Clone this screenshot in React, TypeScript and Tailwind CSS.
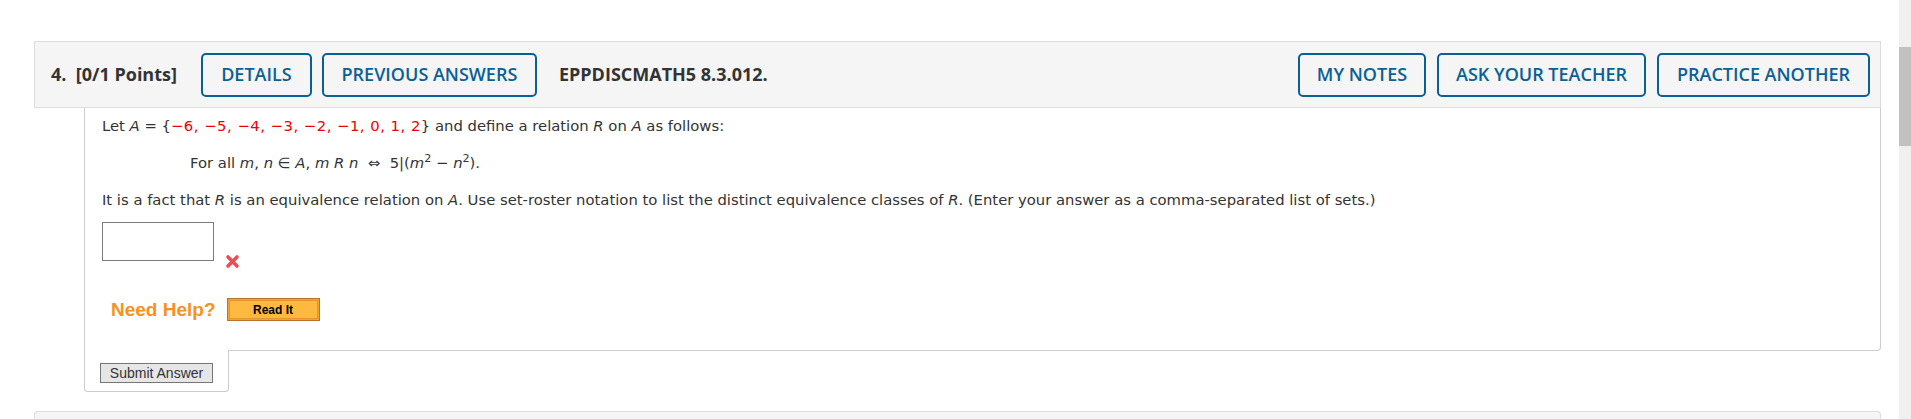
import React from "react";

function HeaderButton({ label, w }: { label: string; w: string }) {
  return (
    <div
      className={`flex h-[44px] ${w} shrink-0 items-center justify-center rounded-[5px] border-2 border-[#0b5f97] text-[#0b5f97]`}
    >
      {label}
    </div>
  );
}

export default function App() {
  return (
    <div className="flex h-[419px] w-full overflow-hidden bg-white">
      <div className="w-[1899px] shrink-0 pl-[34px] pr-[18px] pt-[41px]">
        {/* Header */}
        <div className="flex h-[67px] items-center border border-[#dcdcdc] bg-[#f5f5f5] pl-[16px] pr-[10px] font-['Open_Sans',sans-serif] text-[18px] font-semibold">
          <span className="font-bold text-[#333]">4.&nbsp; [0/1 Points]</span>
          <div className="ml-[24px] flex">
            <HeaderButton label="DETAILS" w="w-[111px]" />
          </div>
          <div className="ml-[10px] flex">
            <HeaderButton label="PREVIOUS ANSWERS" w="w-[215px]" />
          </div>
          <span className="ml-[22px] font-bold text-[#333]">EPPDISCMATH5 8.3.012.</span>
          <div className="flex-1" />
          <div className="flex gap-[11px]">
            <HeaderButton label="MY NOTES" w="w-[128px]" />
            <HeaderButton label="ASK YOUR TEACHER" w="w-[209px]" />
            <HeaderButton label="PRACTICE ANOTHER" w="w-[213px]" />
          </div>
        </div>

        {/* Question panel */}
        <div className="ml-[50px]">
          <div className="h-[243px] rounded-br-[4px] border-x border-b border-[#cccccc] pl-[17px] pt-[9px] font-['DejaVu_Sans',sans-serif] text-[14.8px] leading-[18px] text-[#333]">
            <p className="whitespace-nowrap">
              Let <i>A</i> = {"{"}
              <span className="tracking-[0.5px] text-[#ee0000]">−6, −5, −4, −3, −2, −1, 0, 1, 2</span>
              {"}"} and define a relation <i>R</i> on <i>A</i> as follows:
            </p>
            <p className="mt-[19px] whitespace-nowrap pl-[88px]">
              For all <i>m</i>, <i>n</i> ∈ <i>A</i>, <i>m</i> <i>R</i> <i>n</i> &nbsp;⇔&nbsp; 5|(<i>m</i>
              <sup>2</sup> − <i>n</i>
              <sup>2</sup>).
            </p>
            <p className="mt-[19px] whitespace-nowrap">
              It is a fact that <i>R</i> is an equivalence relation on <i>A</i>. Use set-roster notation to list the
              distinct equivalence classes of <i>R</i>. (Enter your answer as a comma-separated list of sets.)
            </p>
            <div className="mt-[13px] flex items-start">
              <div className="h-[39px] w-[112px] border border-[#7a7a7a] bg-white" />
              <svg className="ml-[11px] mt-[32px]" width="15" height="15" viewBox="0 0 15 15">
                <path d="M3 3 L12 12 M12 3 L3 12" stroke="#ee4b57" strokeWidth="3.6" strokeLinecap="round" />
              </svg>
            </div>
            <div className="mt-[29px] flex items-center pl-[9px]">
              <span className="font-['Liberation_Sans',Arial,sans-serif] text-[19px] font-bold leading-[23px] text-[#f5921e]">
                Need Help?
              </span>
              <div className="ml-[11px] flex h-[23px] w-[93px] items-center justify-center border border-[#b8742a] bg-[#f5a233] p-[1px]">
                <div className="flex h-full w-full items-center justify-center border border-[#e3952f] bg-[#fdb940] font-['Liberation_Sans',Arial,sans-serif] text-[12px] font-bold text-black">
                  Read It
                </div>
              </div>
            </div>
          </div>
          <div className="relative -mt-px h-[42px] w-[145px] rounded-b-[4px] border-x border-b border-[#cccccc] bg-white pl-[15px] pt-[13px]">
            <div className="flex h-[20px] w-[113px] items-center justify-center border border-[#767676] bg-[#e6e6e6] font-['Liberation_Sans',Arial,sans-serif] text-[14px] leading-none text-[#333]">
              Submit Answer
            </div>
          </div>
        </div>

        {/* Next question header (cut off) */}
        <div className="mt-[19px] h-[40px] rounded-t-[4px] border-x border-t border-[#dcdcdc] bg-[#f5f5f5]" />
      </div>

      {/* Scrollbar */}
      <div className="w-[12px] shrink-0 bg-[#f0f0f0]">
        <div className="mt-[47px] h-[99px] bg-[#c1c1c1]" />
      </div>
    </div>
  );
}
